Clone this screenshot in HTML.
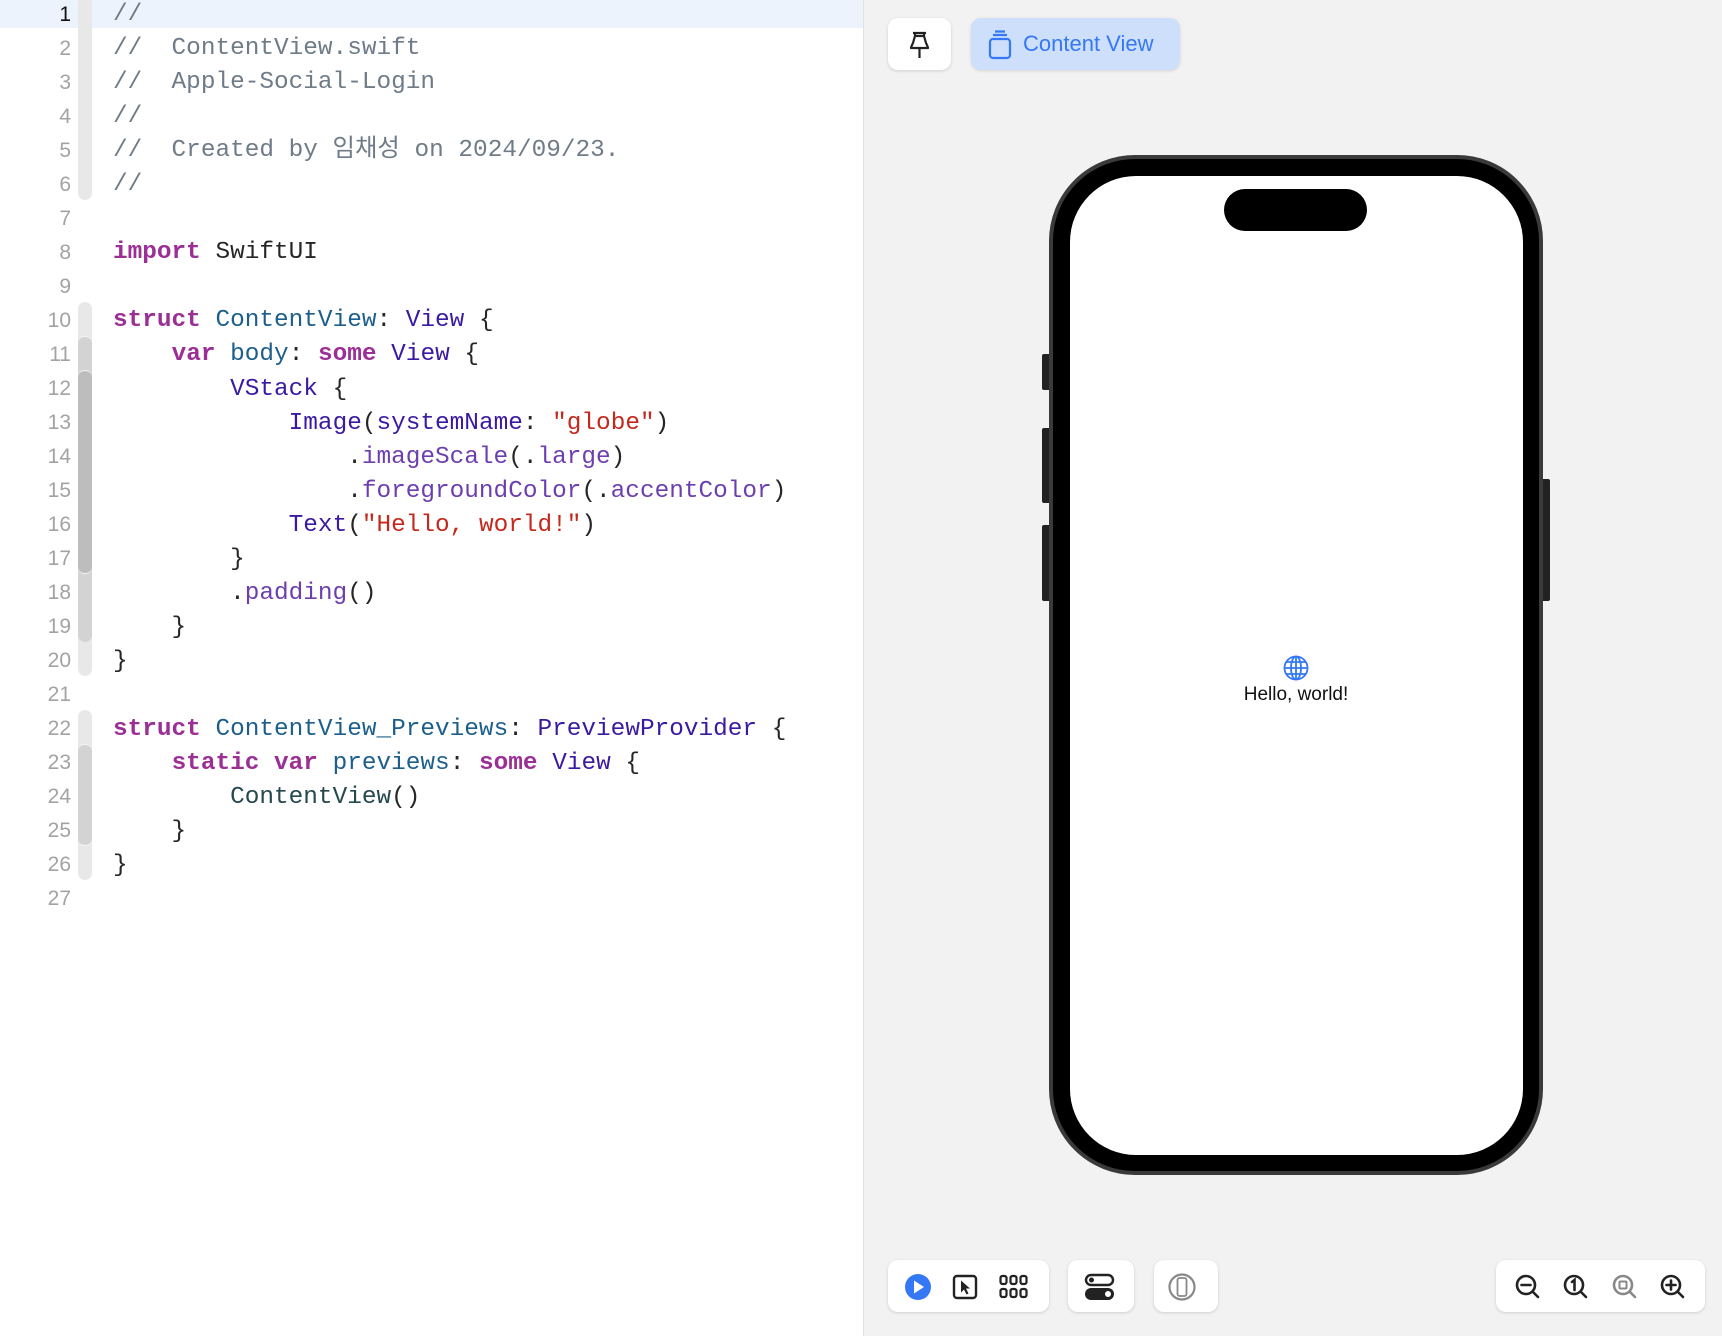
<!DOCTYPE html>
<html><head><meta charset="utf-8"><style>
*{margin:0;padding:0;box-sizing:border-box}
body{width:1722px;height:1336px;overflow:hidden;background:#fff;position:relative;font-family:"Liberation Sans","Noto Sans CJK KR",sans-serif}
#ed{position:absolute;left:0;top:0;width:863px;height:1336px;background:#fff}
.hl{position:absolute;left:0;top:0;width:863px;height:28px;background:#edf3fd}
.ln{position:absolute;left:0;width:71px;text-align:right;font-size:21px;color:#a3a3a3;height:34px;line-height:34px}
.code{position:absolute;left:113px;top:-2px;font-family:"Liberation Mono","Noto Sans CJK KR",monospace;font-size:24.4px;line-height:34.05px;white-space:pre;color:#262626}
.bar{position:absolute;left:78px;width:14px;border-radius:7px}
.c{color:#6f7b87}.k{color:#9b2f96;font-weight:bold}.t{color:#1d5f8c}.p{color:#3b1aa3}.m{color:#6d3eb0}.s{color:#c4291d}.d{color:#25494e}
#rp{position:absolute;left:863px;top:0;width:859px;height:1336px;background:#f2f2f2;border-left:1px solid #e2e2e2}
.btn{position:absolute;background:#fff;border-radius:10px;box-shadow:0 1px 3px rgba(0,0,0,.15)}
</style></head><body>
<div id="ed">
<div class="hl"></div>
<div class="bar" style="top:-4px;height:204px;background:#e8e8e8"></div>
<div class="bar" style="top:302px;height:374px;background:#e8e8e8"></div>
<div class="bar" style="top:336px;height:306px;background:#d3d3d3;border-top:1px solid #f5f5f5"></div>
<div class="bar" style="top:370px;height:204px;background:#bdbdbd;border-top:1px solid #f5f5f5;border-bottom:1px solid #f5f5f5"></div>
<div class="bar" style="top:710px;height:170px;background:#e8e8e8"></div>
<div class="bar" style="top:744px;height:102px;background:#d3d3d3;border-top:1px solid #f5f5f5;border-bottom:1px solid #f5f5f5"></div>
<div style="position:absolute;left:0;top:2.3px;width:80px;height:1000px">
<div class="ln" style="top:-4.3px;color:#111">1</div>
<div class="ln" style="top:29.7px">2</div><div class="ln" style="top:63.7px">3</div><div class="ln" style="top:97.7px">4</div><div class="ln" style="top:131.7px">5</div><div class="ln" style="top:165.7px">6</div><div class="ln" style="top:199.7px">7</div><div class="ln" style="top:233.7px">8</div><div class="ln" style="top:267.7px">9</div><div class="ln" style="top:301.7px">10</div><div class="ln" style="top:335.7px">11</div><div class="ln" style="top:369.7px">12</div><div class="ln" style="top:403.7px">13</div><div class="ln" style="top:437.7px">14</div><div class="ln" style="top:471.7px">15</div><div class="ln" style="top:505.7px">16</div><div class="ln" style="top:539.7px">17</div><div class="ln" style="top:573.7px">18</div><div class="ln" style="top:607.7px">19</div><div class="ln" style="top:641.7px">20</div><div class="ln" style="top:675.7px">21</div><div class="ln" style="top:709.7px">22</div><div class="ln" style="top:743.7px">23</div><div class="ln" style="top:777.7px">24</div><div class="ln" style="top:811.7px">25</div><div class="ln" style="top:845.7px">26</div><div class="ln" style="top:879.7px">27</div>
</div>
<div class="code"><span class="c">//
//  ContentView.swift
//  Apple-Social-Login
//
//  Created by 임채성 on 2024/09/23.
//</span>

<span class="k">import</span> SwiftUI

<span class="k">struct</span> <span class="t">ContentView</span>: <span class="p">View</span> {
    <span class="k">var</span> <span class="t">body</span>: <span class="k">some</span> <span class="p">View</span> {
        <span class="p">VStack</span> {
            <span class="p">Image</span>(<span class="p">systemName</span>: <span class="s">"globe"</span>)
                .<span class="m">imageScale</span>(.<span class="m">large</span>)
                .<span class="m">foregroundColor</span>(.<span class="m">accentColor</span>)
            <span class="p">Text</span>(<span class="s">"Hello, world!"</span>)
        }
        .<span class="m">padding</span>()
    }
}

<span class="k">struct</span> <span class="t">ContentView_Previews</span>: <span class="p">PreviewProvider</span> {
    <span class="k">static</span> <span class="k">var</span> <span class="t">previews</span>: <span class="k">some</span> <span class="p">View</span> {
        <span class="d">ContentView</span>()
    }
}
</div>
</div>
<div id="rp"></div>
<div class="btn" style="left:888px;top:18px;width:63px;height:52px">
<svg width="63" height="52" viewBox="0 0 63 52"><g fill="none" stroke="#222" stroke-width="2.2" stroke-linejoin="round"><path d="M25 15h13M27 15v3l-2 7c-1 2-2 4-2 5h17c0-1-1-3-2-5l-2-7v-3M31.5 30v10"/><path d="M28 18h7"/></g></svg></div>
<div class="btn" style="left:971px;top:18px;width:209px;height:52px;background:#cddffb;box-shadow:0 1px 3px rgba(0,0,0,.12)">
<svg style="position:absolute;left:16px;top:12px" width="26" height="30" viewBox="0 0 26 30"><g fill="none" stroke="#3478f6" stroke-width="2.2"><rect x="3" y="9" width="20" height="19" rx="3"/><path d="M6 5h14M8 1.5h10"/></g></svg>
<div style="position:absolute;left:52px;top:0;line-height:52px;font-size:22px;color:#3478f6">Content View</div></div>
<div style="position:absolute;left:1042px;top:354px;width:9px;height:36px;background:#222;border-radius:2px"></div>
<div style="position:absolute;left:1042px;top:428px;width:9px;height:75px;background:#222;border-radius:2px"></div>
<div style="position:absolute;left:1042px;top:525px;width:9px;height:76px;background:#222;border-radius:2px"></div>
<div style="position:absolute;left:1541px;top:479px;width:9px;height:122px;background:#222;border-radius:2px"></div>
<div style="position:absolute;left:1049px;top:155px;width:494px;height:1020px;background:#000;border:4px solid #3a3a3a;border-radius:86px"></div>
<div style="position:absolute;left:1070px;top:176px;width:453px;height:979px;background:#fff;border-radius:66px"></div>
<div style="position:absolute;left:1224px;top:189px;width:143px;height:42px;background:#000;border-radius:21px"></div>
<svg style="position:absolute;left:1283px;top:655px" width="26" height="26" viewBox="0 0 26 26"><g fill="none" stroke="#3478f6" stroke-width="1.8"><circle cx="13" cy="13" r="11.5"/><ellipse cx="13" cy="13" rx="5" ry="11.5"/><path d="M13 1.5v23M1.5 13h23M3.5 7h19M3.5 19h19"/></g></svg>
<div style="position:absolute;left:1200px;top:684px;width:192px;text-align:center;font-size:19px;color:#111">Hello, world!</div>
<div class="btn" style="left:888px;top:1260px;width:161px;height:52px">
<svg width="161" height="52" viewBox="0 0 161 52"><circle cx="30" cy="27" r="13" fill="#3478f6"/><path d="M26 20.5v13l10-6.5z" fill="#fff"/>
<rect x="66" y="16" width="22" height="22" rx="3" fill="none" stroke="#222" stroke-width="2.4"/><path d="M73 20.5v12l3-3 2.5 5 2-1-2.5-5h4z" fill="#222"/>
<g fill="none" stroke="#222" stroke-width="2.2"><rect x="112.5" y="16" width="6" height="8" rx="2"/><rect x="122.5" y="16" width="6" height="8" rx="2"/><rect x="132.5" y="16" width="6" height="8" rx="2"/><rect x="112.5" y="29" width="6" height="8" rx="2"/><rect x="122.5" y="29" width="6" height="8" rx="2"/><rect x="132.5" y="29" width="6" height="8" rx="2"/></g></svg></div>
<div class="btn" style="left:1068px;top:1260px;width:66px;height:52px">
<svg width="66" height="52" viewBox="0 0 66 52"><rect x="18" y="15" width="27" height="10" rx="5" fill="none" stroke="#222" stroke-width="2.4"/><circle cx="23.5" cy="20" r="2.5" fill="#222"/><rect x="17" y="28" width="29" height="12" rx="6" fill="#222"/><circle cx="40" cy="34" r="3" fill="#fff"/></svg></div>
<div class="btn" style="left:1154px;top:1260px;width:64px;height:52px">
<svg width="64" height="52" viewBox="0 0 64 52"><circle cx="28" cy="27" r="12.5" fill="none" stroke="#888" stroke-width="2.2"/><rect x="23.5" y="18" width="9" height="18" rx="2" fill="none" stroke="#888" stroke-width="1.8"/></svg></div>
<div class="btn" style="left:1496px;top:1260px;width:209px;height:52px">
<svg width="209" height="52" viewBox="0 0 209 52"><g transform="translate(6,0)" fill="none" stroke-width="2.6" stroke-linecap="round">
<g stroke="#222"><circle cx="24" cy="25" r="9"/><path d="M30.5 31.5l5.5 5.5M19.5 25h9"/></g>
<g stroke="#222"><circle cx="72" cy="25" r="9"/><path d="M78.5 31.5l5.5 5.5M70 22l2.5-2v10"/></g>
<g stroke="#888"><circle cx="121" cy="25" r="9"/><path d="M127.5 31.5l5.5 5.5"/><rect x="117.5" y="21.5" width="7" height="7" rx="1" stroke-width="2"/></g>
<g stroke="#222"><circle cx="169" cy="25" r="9"/><path d="M175.5 31.5l5.5 5.5M164.5 25h9M169 20.5v9"/></g></g></svg></div>
</body></html>
